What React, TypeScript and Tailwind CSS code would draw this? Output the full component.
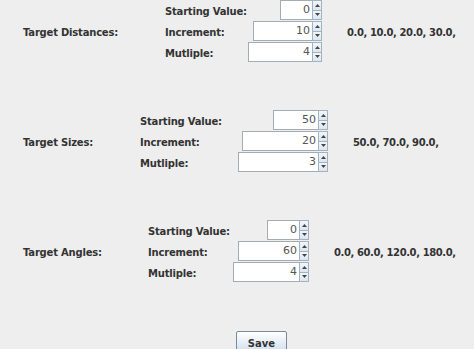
import React from 'react';

type Spin = { value: string; width: number };

type Section = {
  title: string;
  titleWidth: number;
  spinRight: number;
  spinners: Spin[];
  result: string;
};

const SECTIONS: Section[] = [
  {
    title: 'Target Distances:',
    titleWidth: 142,
    spinRight: 322,
    spinners: [
      { value: '0', width: 42 },
      { value: '10', width: 69 },
      { value: '4', width: 74 },
    ],
    result: '0.0, 10.0, 20.0, 30.0,',
  },
  {
    title: 'Target Sizes:',
    titleWidth: 117,
    spinRight: 328,
    spinners: [
      { value: '50', width: 55 },
      { value: '20', width: 86 },
      { value: '3', width: 90 },
    ],
    result: '50.0, 70.0, 90.0,',
  },
  {
    title: 'Target Angles:',
    titleWidth: 125,
    spinRight: 309,
    spinners: [
      { value: '0', width: 42 },
      { value: '60', width: 71 },
      { value: '4', width: 76 },
    ],
    result: '0.0, 60.0, 120.0, 180.0,',
  },
];

const ROW_LABELS = ['Starting Value:', 'Increment:', 'Mutliple:'];

function Arrow({ up }: { up?: boolean }) {
  return (
    <div className="flex-1 flex items-center justify-center bg-gradient-to-b from-[#f2f6fa] to-[#dce6f0] border border-[#a3b2c1]">
      <svg width="5" height="3" viewBox="0 0 5 3">
        {up ? <path d="M2.5 0 L5 3 L0 3 Z" fill="#444" /> : <path d="M0 0 L5 0 L2.5 3 Z" fill="#444" />}
      </svg>
    </div>
  );
}

function Spinner({ value, width }: Spin) {
  return (
    <div className="flex h-[20px]" style={{ width }}>
      <div className="flex-1 bg-white border border-[#a3acb5] border-r-0 flex items-center justify-end pr-[2px] text-[11px] font-normal tracking-normal text-[#555]">
        {value}
      </div>
      <div className="w-[10px] flex flex-col -space-y-px">
        <Arrow up />
        <Arrow />
      </div>
    </div>
  );
}

export default function App() {
  return (
    <div
      className="w-[474px] h-[349px] bg-[#eeeeee] overflow-hidden text-[#333333]"
      style={{ fontFamily: '"DejaVu Sans", sans-serif' }}
    >
      {SECTIONS.map((s) => {
        const labelLeft = 23 + s.titleWidth;
        return (
          <div key={s.title} className="flex items-center h-[62px] mb-[48px] pl-[23px] font-bold text-[10px] tracking-[-0.2px]">
            <div className="shrink-0 pt-[3px]" style={{ width: s.titleWidth }}>{s.title}</div>
            <div className="flex flex-col gap-px shrink-0" style={{ width: s.spinRight - labelLeft }}>
              {s.spinners.map((sp, i) => (
                <div key={i} className="flex items-center justify-between h-[20px]">
                  <span className="whitespace-nowrap pt-[3px]">{ROW_LABELS[i]}</span>
                  <Spinner {...sp} />
                </div>
              ))}
            </div>
            <div className="ml-[25px] whitespace-nowrap tracking-[-0.4px] pt-[3px]">{s.result}</div>
          </div>
        );
      })}
      <div className="ml-[236px]">
        <button className="w-[51px] h-[26px] border border-[#7a8a99] rounded-[2px] bg-gradient-to-b from-white to-[#c6d8ea] font-bold text-[10px] text-[#333]">
          Save
        </button>
      </div>
    </div>
  );
}
